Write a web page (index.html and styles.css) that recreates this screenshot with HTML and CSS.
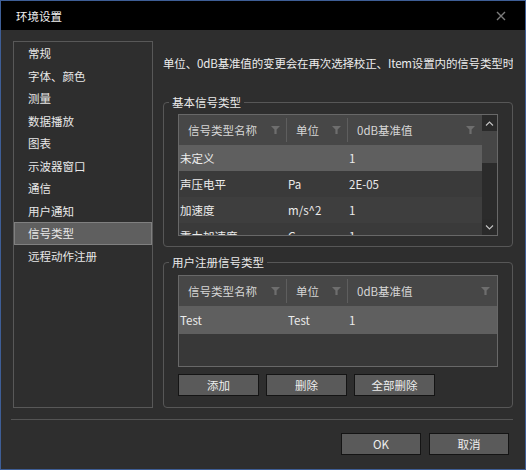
FILE: index.html
```html
<!DOCTYPE html>
<html lang="zh-CN">
<head>
<meta charset="utf-8">
<title>环境设置</title>
<link rel="stylesheet" href="styles.css">
</head>
<body>
<div class="window">
  <div class="titlebar">
    <span class="title">环境设置</span>
    <svg class="close" width="10" height="10" viewBox="0 0 10 10"><path d="M1 1L9 9M9 1L1 9" stroke="#7c7c7c" stroke-width="1.4"/></svg>
  </div>

  <div class="content">
    <ul class="nav">
      <li>常规</li>
      <li>字体、颜色</li>
      <li>测量</li>
      <li>数据播放</li>
      <li>图表</li>
      <li>示波器窗口</li>
      <li>通信</li>
      <li>用户通知</li>
      <li class="active">信号类型</li>
      <li>远程动作注册</li>
    </ul>

    <div class="pane">
      <p class="note">单位、0dB基准值的变更会在再次选择校正、Item设置内的信号类型时,</p>

      <section class="group group-basic">
        <div class="group-title">基本信号类型</div>
        <div class="grid-box grid-basic">
          <div class="grid-scroll">
            <table class="grid">
              <colgroup><col class="c1"><col class="c2"><col class="c3"></colgroup>
              <thead>
                <tr>
                  <th><div class="th-in"><span>信号类型名称</span><svg class="filter" viewBox="0 0 9 8"><path d="M0 0H9L5.6 3.6V8H3.4V3.6Z"/></svg></div></th>
                  <th><div class="th-in"><span>单位</span><svg class="filter" viewBox="0 0 9 8"><path d="M0 0H9L5.6 3.6V8H3.4V3.6Z"/></svg></div></th>
                  <th class="last"><div class="th-in"><span>0dB基准值</span><svg class="filter" viewBox="0 0 9 8"><path d="M0 0H9L5.6 3.6V8H3.4V3.6Z"/></svg></div></th>
                </tr>
              </thead>
              <tbody>
                <tr class="sel"><td>未定义</td><td></td><td>1</td></tr>
                <tr><td>声压电平</td><td>Pa</td><td>2E-05</td></tr>
                <tr class="alt"><td>加速度</td><td>m/s^2</td><td>1</td></tr>
                <tr><td>重力加速度</td><td>G</td><td>1</td></tr>
              </tbody>
            </table>
          </div>
          <div class="vscroll">
            <div class="sb-btn"><svg width="9" height="5" viewBox="0 0 9 5"><path d="M1 4.5L4.5 1L8 4.5" fill="none" stroke="#c4c4c4" stroke-width="1.1"/></svg></div>
            <div class="sb-thumb"></div>
            <div class="sb-track"></div>
            <div class="sb-btn"><svg width="9" height="5" viewBox="0 0 9 5"><path d="M1 0.5L4.5 4L8 0.5" fill="none" stroke="#c4c4c4" stroke-width="1.1"/></svg></div>
          </div>
        </div>
      </section>

      <section class="group group-user">
        <div class="group-title">用户注册信号类型</div>
        <div class="grid-box grid-user">
          <table class="grid">
            <colgroup><col class="c1"><col class="c2"><col class="c3"></colgroup>
            <thead>
              <tr>
                <th><div class="th-in"><span>信号类型名称</span><svg class="filter" viewBox="0 0 9 8"><path d="M0 0H9L5.6 3.6V8H3.4V3.6Z"/></svg></div></th>
                <th><div class="th-in"><span>单位</span><svg class="filter" viewBox="0 0 9 8"><path d="M0 0H9L5.6 3.6V8H3.4V3.6Z"/></svg></div></th>
                <th class="last"><div class="th-in"><span>0dB基准值</span><svg class="filter" viewBox="0 0 9 8"><path d="M0 0H9L5.6 3.6V8H3.4V3.6Z"/></svg></div></th>
              </tr>
            </thead>
            <tbody>
              <tr class="sel tall"><td>Test</td><td>Test</td><td>1</td></tr>
            </tbody>
          </table>
        </div>
        <div class="actions">
          <button class="btn">添加</button>
          <button class="btn">删除</button>
          <button class="btn">全部删除</button>
        </div>
      </section>
    </div>
  </div>

  <div class="sep"></div>

  <div class="footer">
    <button class="btn btn-dlg">OK</button>
    <button class="btn btn-dlg">取消</button>
  </div>
</div>
</body>
</html>
```

FILE: styles.css
```css
* {
  box-sizing: border-box;
}

html, body {
  margin: 0;
  padding: 0;
  background: #2e2e2e;
}

body {
  font-family: "Noto Sans CJK SC", "Noto Sans", sans-serif;
  font-size: 11.5px;
  color: #e8e8e8;
}

.window {
  width: 526px;
  height: 470px;
  border: 1px solid #3e5e96;
  background: #2e2e2e;
  display: flex;
  flex-direction: column;
  overflow: hidden;
}

/* title bar */
.titlebar {
  height: 29px;
  flex: none;
  background: #000;
  display: flex;
  align-items: center;
  justify-content: space-between;
  padding: 0 19px 0 15px;
}

.title {
  color: #f2f2f2;
  line-height: 16px;
}

.close {
  display: block;
}

/* main area */
.content {
  display: flex;
  padding: 11px 12px 0 12px;
  height: 378px;
  flex: none;
}

.nav {
  list-style: none;
  margin: 0;
  padding: 0;
  width: 140px;
  height: 367px;
  flex: none;
  border: 1px solid #585858;
}

.nav li {
  height: 22.5px;
  line-height: 20.5px;
  padding-left: 13px;
  border: 1px solid transparent;
  color: #e8e8e8;
  white-space: nowrap;
}

.nav li.active {
  background: #5f5f5f;
  border-color: #808080;
}

.pane {
  flex: 1;
  min-width: 0;
  margin-left: 10px;
  display: flex;
  flex-direction: column;
}

.note {
  margin: 14px 0 0;
  line-height: 16px;
  height: 16px;
  white-space: nowrap;
  overflow: hidden;
  letter-spacing: -0.15px;
  color: #ececec;
}

/* group boxes */
.group {
  border: 1px solid #575757;
  border-radius: 4px;
  padding: 0 14px;
}

.group-basic {
  margin-top: 31px;
  padding-bottom: 10px;
}

.group-user {
  margin-top: 15px;
  padding-bottom: 11px;
}

.group-title {
  width: fit-content;
  margin: -9px 0 0 -9px;
  padding: 0 3px;
  line-height: 16px;
  background: #2e2e2e;
  color: #eaeaea;
}

/* grids */
.grid-box {
  border: 1px solid #686868;
  background: #383838;
  overflow: hidden;
}

.grid-basic {
  margin-top: 4px;
  height: 122px;
  display: flex;
}

.grid-user {
  margin-top: 5px;
  height: 92px;
}

.grid-scroll {
  flex: 1;
  min-width: 0;
  overflow: hidden;
}

.grid {
  width: 100%;
  table-layout: fixed;
  border-collapse: collapse;
  border-spacing: 0;
}

.grid col.c1 { width: 108px; }
.grid col.c2 { width: 61px; }

.grid th {
  height: 30px;
  padding: 0;
  background-color: #474747;
  background-image: linear-gradient(#5e5e5e, #5e5e5e);
  background-size: 1px 24px;
  background-position: right center;
  background-repeat: no-repeat;
  font-weight: normal;
  color: #d6d6d6;
  text-align: left;
}

.grid th.last {
  background-image: none;
}

.th-in {
  display: flex;
  align-items: center;
  justify-content: space-between;
  padding: 0 7px 0 9px;
  white-space: nowrap;
}

.filter {
  width: 9px;
  height: 8px;
  flex: none;
  fill: #6e6e6e;
}

.grid td {
  height: 26px;
  padding: 0 0 0 1px;
  white-space: nowrap;
  overflow: hidden;
  color: #ececec;
  background: #3a3a3a;
}

.grid tr.alt td {
  background: #3e3e3e;
}

.grid tr.sel td {
  background: #5f5f5f;
}

.grid tr.tall td {
  height: 28px;
}

/* vertical scrollbar */
.vscroll {
  width: 15px;
  flex: none;
  display: flex;
  flex-direction: column;
  background: #2b2b2b;
}

.sb-btn {
  height: 16px;
  display: flex;
  align-items: center;
  justify-content: center;
  background: #2a2a2a;
}

.sb-thumb {
  height: 32px;
  background: #464646;
}

.sb-track {
  flex: 1;
}

/* buttons */
.btn {
  font: inherit;
  color: #eeeeee;
  background: #5a5a5a;
  border: 1px solid #141414;
  border-radius: 0;
  height: 22px;
  padding: 0;
  line-height: 20px;
}

.actions {
  display: flex;
  gap: 7px;
  margin-top: 7px;
}

.actions .btn {
  width: 81px;
}

.sep {
  height: 1px;
  background: #545454;
  margin: 11px 12px 0 10px;
  flex: none;
}

.footer {
  display: flex;
  justify-content: flex-end;
  gap: 8px;
  padding: 13px 16px 0 0;
}

.btn-dlg {
  width: 80px;
}
```
